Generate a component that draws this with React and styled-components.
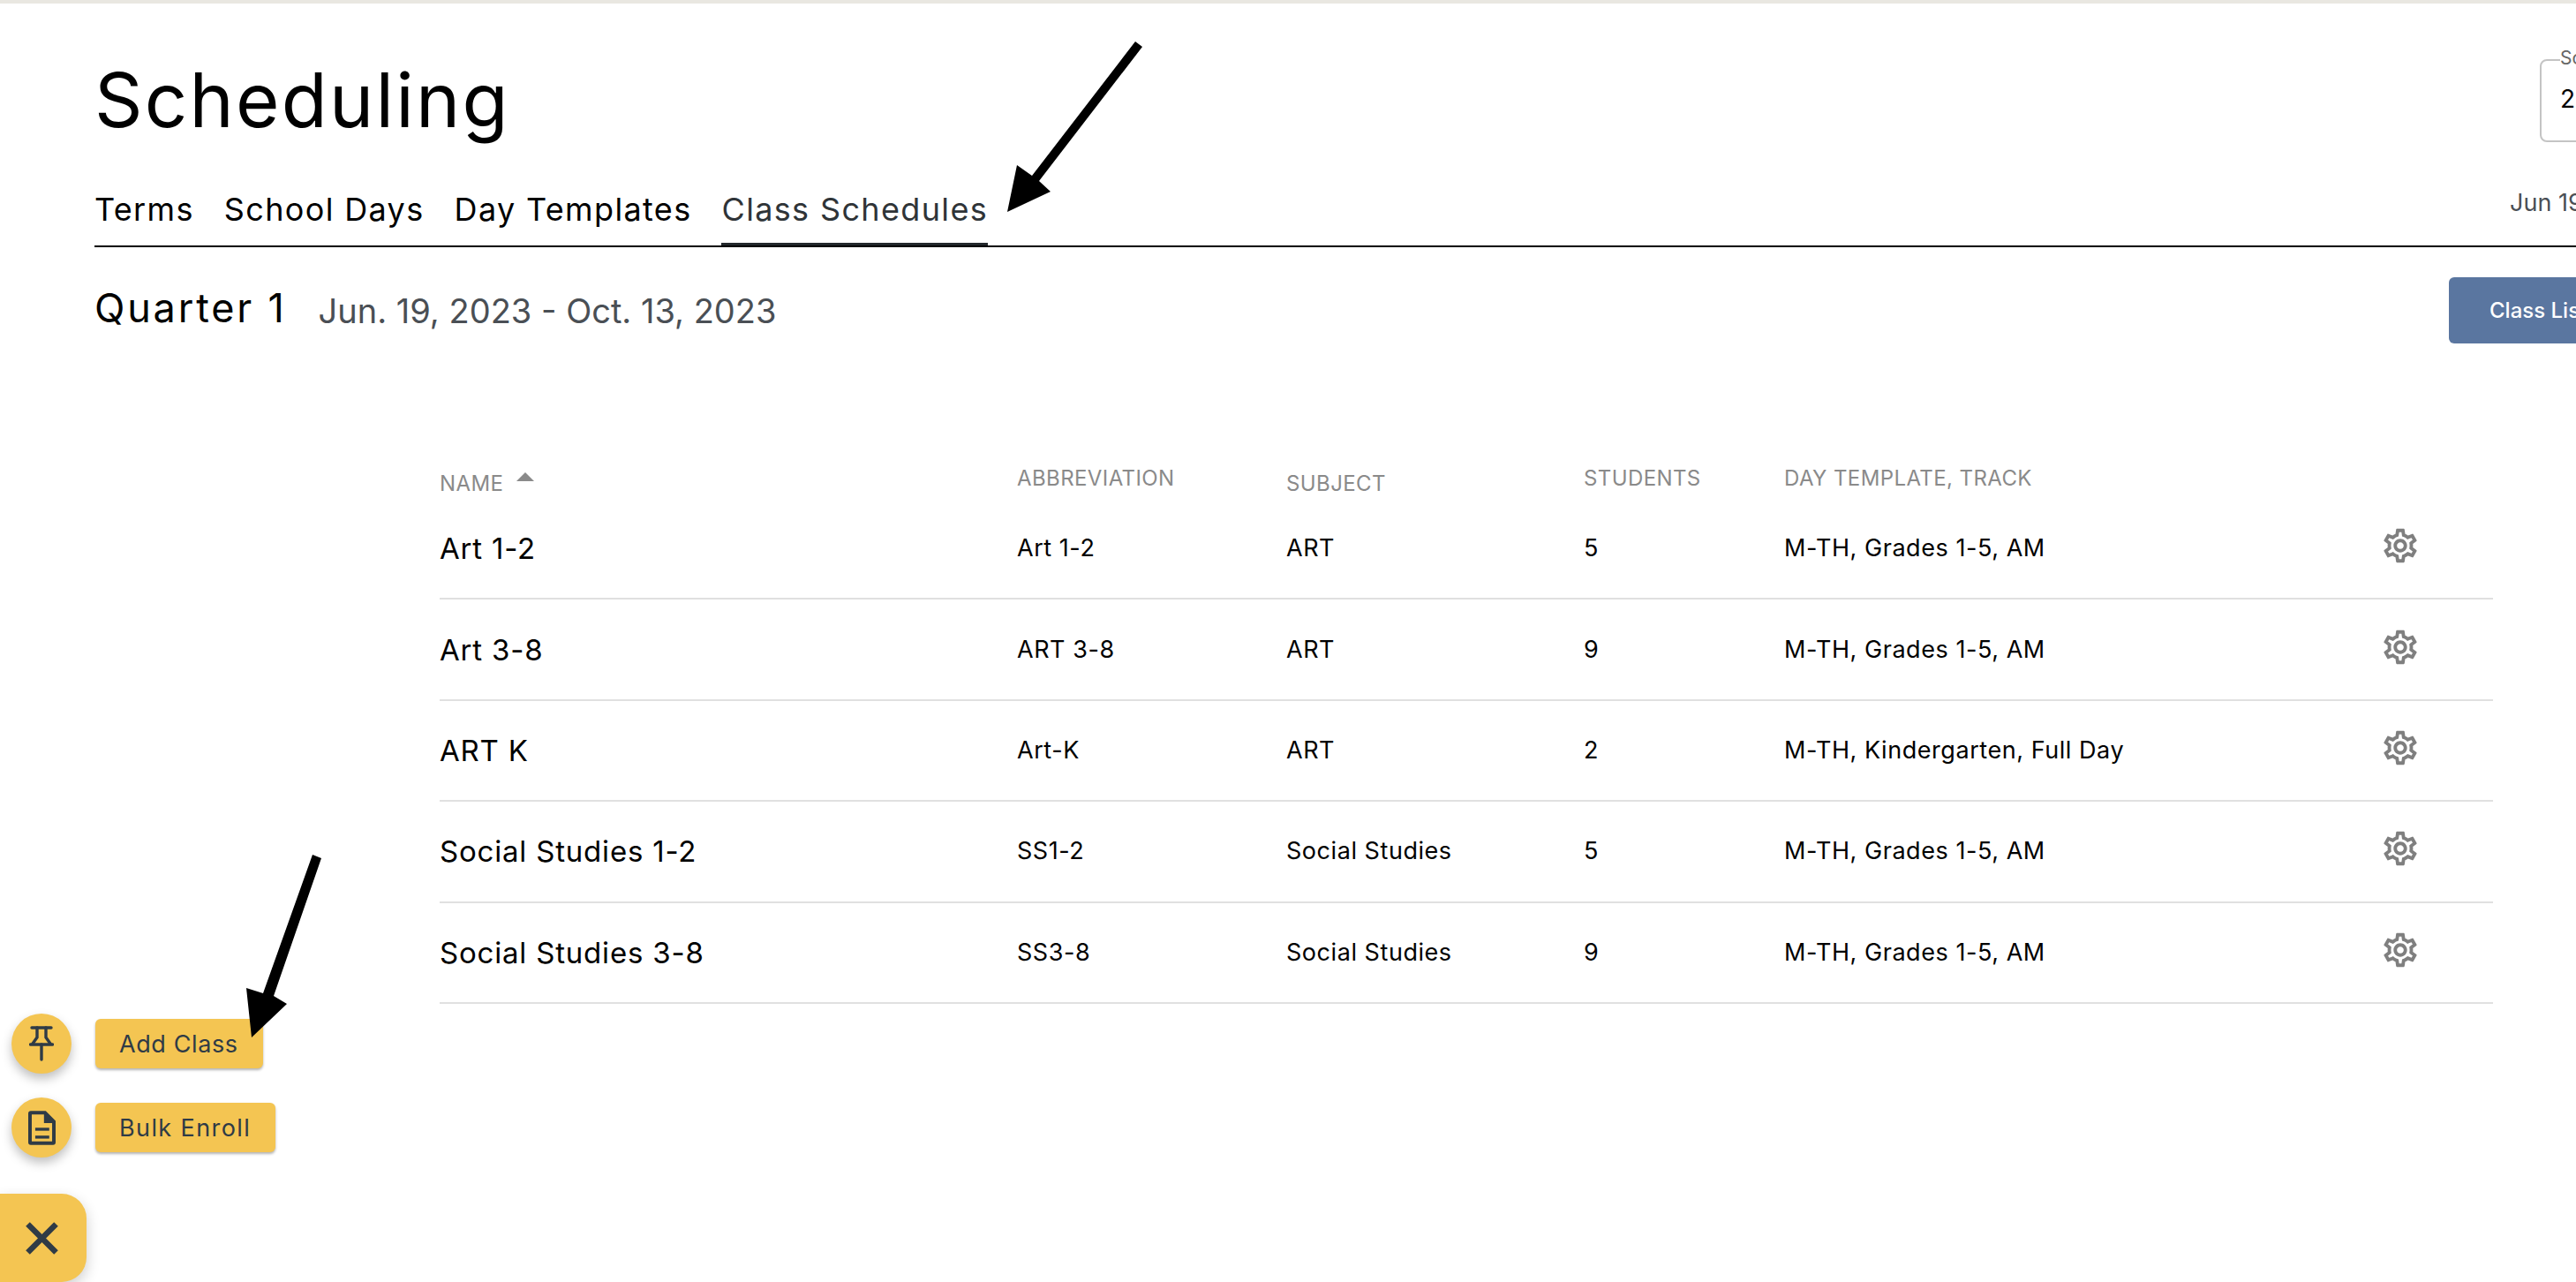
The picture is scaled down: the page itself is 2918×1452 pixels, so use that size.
import React from "react";
import styled, { createGlobalStyle } from "styled-components";
import { MdOutlineSettings } from "react-icons/md";

const GlobalStyle = createGlobalStyle`
  html, body {
    margin: 0;
    padding: 0;
    width: 2918px;
    height: 1452px;
    overflow: hidden;
    background: #fff;
    font-family: "Inter", "Noto Sans", sans-serif;
    color: #000;
  }
`;

const rows = [
  { name: "Art 1-2", abbr: "Art 1-2", subject: "ART", students: 5, template: "M-TH, Grades 1-5, AM" },
  { name: "Art 3-8", abbr: "ART 3-8", subject: "ART", students: 9, template: "M-TH, Grades 1-5, AM" },
  { name: "ART K", abbr: "Art-K", subject: "ART", students: 2, template: "M-TH, Kindergarten, Full Day" },
  { name: "Social Studies 1-2", abbr: "SS1-2", subject: "Social Studies", students: 5, template: "M-TH, Grades 1-5, AM" },
  { name: "Social Studies 3-8", abbr: "SS3-8", subject: "Social Studies", students: 9, template: "M-TH, Grades 1-5, AM" },
];

const tabs = ["Terms", "School Days", "Day Templates", "Class Schedules"];

function PinIcon() {
  return (
    <svg viewBox="0 0 28 40" width="28" height="40" fill="none" stroke="#2f3b46" strokeWidth="3.4" strokeLinecap="round">
      <path d="M3 2h22" />
      <path d="M9 2v11l-5 7" />
      <path d="M19 2v11l5 7" />
      <path d="M1.5 21h25" />
      <path d="M14 21v17" />
    </svg>
  );
}

function DocIcon() {
  return (
    <svg viewBox="0 0 31.3 39" width="31" height="39" fill="#2f3b46">
      <path
        fillRule="evenodd"
        d="M3 0H20L31.3 11.5V36a3 3 0 0 1-3 3H3a3 3 0 0 1-3-3V3a3 3 0 0 1 3-3zM4 4V35H27.3V14H18V4z"
      />
      <rect x="8" y="19.3" width="16" height="3.4" />
      <rect x="8" y="28.3" width="16" height="3.4" />
    </svg>
  );
}

function CloseIcon() {
  return (
    <svg viewBox="0 0 37 37" width="37" height="37" stroke="#2f3b46" strokeWidth="6.5">
      <path d="M2.5 2.5l32 32" />
      <path d="M34.5 2.5l-32 32" />
    </svg>
  );
}

function App() {
  return (
    <Page>
      <GlobalStyle />
      <TopStrip />
      <Content>
        <Header>
          <HeaderMain>
            <Title>Scheduling</Title>
            <Tabs>
              {tabs.map((tab) => (
                <Tab key={tab} $active={tab === "Class Schedules"}>{tab}</Tab>
              ))}
            </Tabs>
          </HeaderMain>
          <YearBlock>
            <YearSelect>
              <YearLabel>School Year</YearLabel>
              2023-2024
            </YearSelect>
            <YearDates>Jun 19, 2023 - Jun</YearDates>
          </YearBlock>
        </Header>
        <TermRow>
          <TermName>Quarter 1</TermName>
          <TermDates>Jun. 19, 2023 - Oct. 13, 2023</TermDates>
          <ClassListButton>Class List</ClassListButton>
        </TermRow>
        <Table>
          <HeadRow>
            <HeadCell $low>
              NAME
              <SortArrow />
            </HeadCell>
            <HeadCell>ABBREVIATION</HeadCell>
            <HeadCell $low>SUBJECT</HeadCell>
            <HeadCell>STUDENTS</HeadCell>
            <HeadCell>DAY TEMPLATE, TRACK</HeadCell>
          </HeadRow>
          {rows.map((row) => (
            <Row key={row.name}>
              <NameCell>{row.name}</NameCell>
              <Cell>{row.abbr}</Cell>
              <Cell>{row.subject}</Cell>
              <Cell>{row.students}</Cell>
              <Cell>{row.template}</Cell>
              <GearCell>
                <MdOutlineSettings />
              </GearCell>
            </Row>
          ))}
        </Table>
      </Content>

      <SpeedDial>
        <DialRow>
          <DialIcon>
            <PinIcon />
          </DialIcon>
          <DialButton $width={190} $spacing={0.6}>Add Class</DialButton>
        </DialRow>
        <DialRow>
          <DialIcon>
            <DocIcon />
          </DialIcon>
          <DialButton $width={204} $spacing={1.4}>Bulk Enroll</DialButton>
        </DialRow>
      </SpeedDial>
      <CloseFab>
        <CloseIcon />
      </CloseFab>

      <ArrowLayer viewBox="0 0 2918 1452">
        <path d="M1286 47 L1294 53 L1177 205 L1190 217 L1141 240 L1152 187 L1169 199 Z" />
        <path d="M354 968 L364 972 L310 1128 L325 1137 L285 1175 L279 1119 L298 1125 Z" />
      </ArrowLayer>
    </Page>
  );
}

export default App;

const Page = styled.div`
  position: relative;
  width: 2918px;
  height: 1452px;
  overflow: hidden;
`;
const TopStrip = styled.div`
  height: 4px;
  background: #e9e7e1;
`;
const Content = styled.div`
  width: 2933px;
  padding-left: 107px;
`;
const Header = styled.div`
  display: flex;
  justify-content: space-between;
  align-items: flex-start;
  height: 274px;
  border-bottom: 2px solid #000;
`;
const HeaderMain = styled.div`
  display: flex;
  flex-direction: column;
`;
const Title = styled.h1`
  margin: 0;
  padding-top: 60px;
  height: 144px;
  font-size: 85px;
  line-height: 100px;
  font-weight: 400;
  letter-spacing: 2.2px;
`;
const YearBlock = styled.div`
  display: flex;
  flex-direction: column;
  align-items: flex-end;
  padding-top: 63px;
`;
const YearSelect = styled.div`
  position: relative;
  box-sizing: border-box;
  width: 163px;
  height: 94px;
  padding: 26px 0 0 21px;
  border: 2px solid #c4c4c4;
  border-radius: 8px;
  font-size: 28px;
  line-height: 34px;
  white-space: nowrap;
`;
const YearLabel = styled.span`
  position: absolute;
  top: -16px;
  left: 21px;
  padding-right: 4px;
  background: #fff;
  font-size: 21px;
  line-height: 26px;
  color: #666;
`;
const YearDates = styled.div`
  width: 197px;
  margin-top: 52px;
  font-size: 27px;
  line-height: 34px;
  color: #4a4f55;
  white-space: nowrap;
`;
const Tabs = styled.div`
  display: flex;
  gap: 34px;
`;
const Tab = styled.div`
  box-sizing: border-box;
  height: 70px;
  padding-top: 7px;
  font-size: 36px;
  line-height: 44px;
  letter-spacing: 1.35px;
  color: ${(props) => (props.$active ? "#2f3438" : "#000")};
  border-bottom: 3px solid ${(props) => (props.$active ? "#23282c" : "transparent")};
`;
const TermRow = styled.div`
  display: flex;
  align-items: flex-start;
  height: 215px;
  padding-top: 34px;
  box-sizing: border-box;
`;
const TermName = styled.div`
  margin-top: 8px;
  font-size: 45px;
  line-height: 54px;
  letter-spacing: 2.8px;
`;
const TermDates = styled.div`
  margin: 13px 0 0 36px;
  font-size: 38px;
  line-height: 50px;
  color: #4a4f55;
`;
const ClassListButton = styled.button`
  box-sizing: border-box;
  width: 266px;
  height: 75px;
  margin-left: auto;
  padding: 0 0 0 46px;
  border: none;
  border-radius: 6px;
  background: #5a76a0;
  color: #fff;
  font-family: inherit;
  font-size: 24px;
  font-weight: 500;
  text-align: left;
`;
const Table = styled.div`
  width: 2326px;
  margin-left: 391px;
`;
const HeadRow = styled.div`
  display: grid;
  grid-template-columns: 654px 305px 337px 227px 1fr;
  height: 70px;
`;
const HeadCell = styled.div`
  display: flex;
  gap: 15px;
  padding-top: ${(props) => (props.$low ? "39px" : "33px")};
  font-size: 24px;
  line-height: 28px;
  letter-spacing: 0.4px;
  color: #8a8a8a;
`;
const SortArrow = styled.span`
  width: 0;
  height: 0;
  margin-top: 1px;
  border-left: 10px solid transparent;
  border-right: 10px solid transparent;
  border-bottom: 10px solid #8a8a8a;
`;
const Row = styled.div`
  box-sizing: border-box;
  display: grid;
  grid-template-columns: 654px 305px 337px 227px 675px 1fr;
  align-items: center;
  height: 114.4px;
  border-bottom: 2px solid #e0e0e0;
`;
const Cell = styled.div`
  font-size: 27px;
  line-height: 34px;
  letter-spacing: 0.55px;
`;
const NameCell = styled.div`
  font-size: 33px;
  line-height: 40px;
  letter-spacing: 0.8px;
`;
const GearCell = styled.div`
  display: flex;
  margin-top: -6px;
  font-size: 46px;
  color: #7f7f7f;
`;
const SpeedDial = styled.div`
  position: absolute;
  left: 13px;
  top: 1148px;
  display: flex;
  flex-direction: column;
  gap: 27px;
`;
const DialRow = styled.div`
  display: flex;
  align-items: center;
  gap: 27px;
`;
const DialIcon = styled.div`
  display: flex;
  align-items: center;
  justify-content: center;
  width: 68px;
  height: 68px;
  border-radius: 50%;
  background: #f4c552;
  box-shadow: 0 6px 12px rgba(0, 0, 0, 0.25);
`;
const DialButton = styled.button`
  width: ${(props) => props.$width}px;
  height: 56px;
  padding: 0 0 0 27px;
  border: none;
  border-radius: 6px;
  background: #f4c552;
  color: #2f3b46;
  font-family: inherit;
  font-size: 27px;
  letter-spacing: ${(props) => props.$spacing}px;
  text-align: left;
  box-shadow: 0 2px 3px rgba(0, 0, 0, 0.3);
`;
const CloseFab = styled.div`
  position: absolute;
  left: 0;
  top: 1352px;
  display: flex;
  align-items: center;
  justify-content: center;
  width: 98px;
  height: 100px;
  padding-right: 4px;
  box-sizing: border-box;
  border-radius: 0 28px 28px 0;
  background: #f4c552;
  box-shadow: 0 6px 16px rgba(0, 0, 0, 0.2);
`;
const ArrowLayer = styled.svg`
  position: absolute;
  inset: 0;
  width: 2918px;
  height: 1452px;
  fill: #000;
  pointer-events: none;
`;
